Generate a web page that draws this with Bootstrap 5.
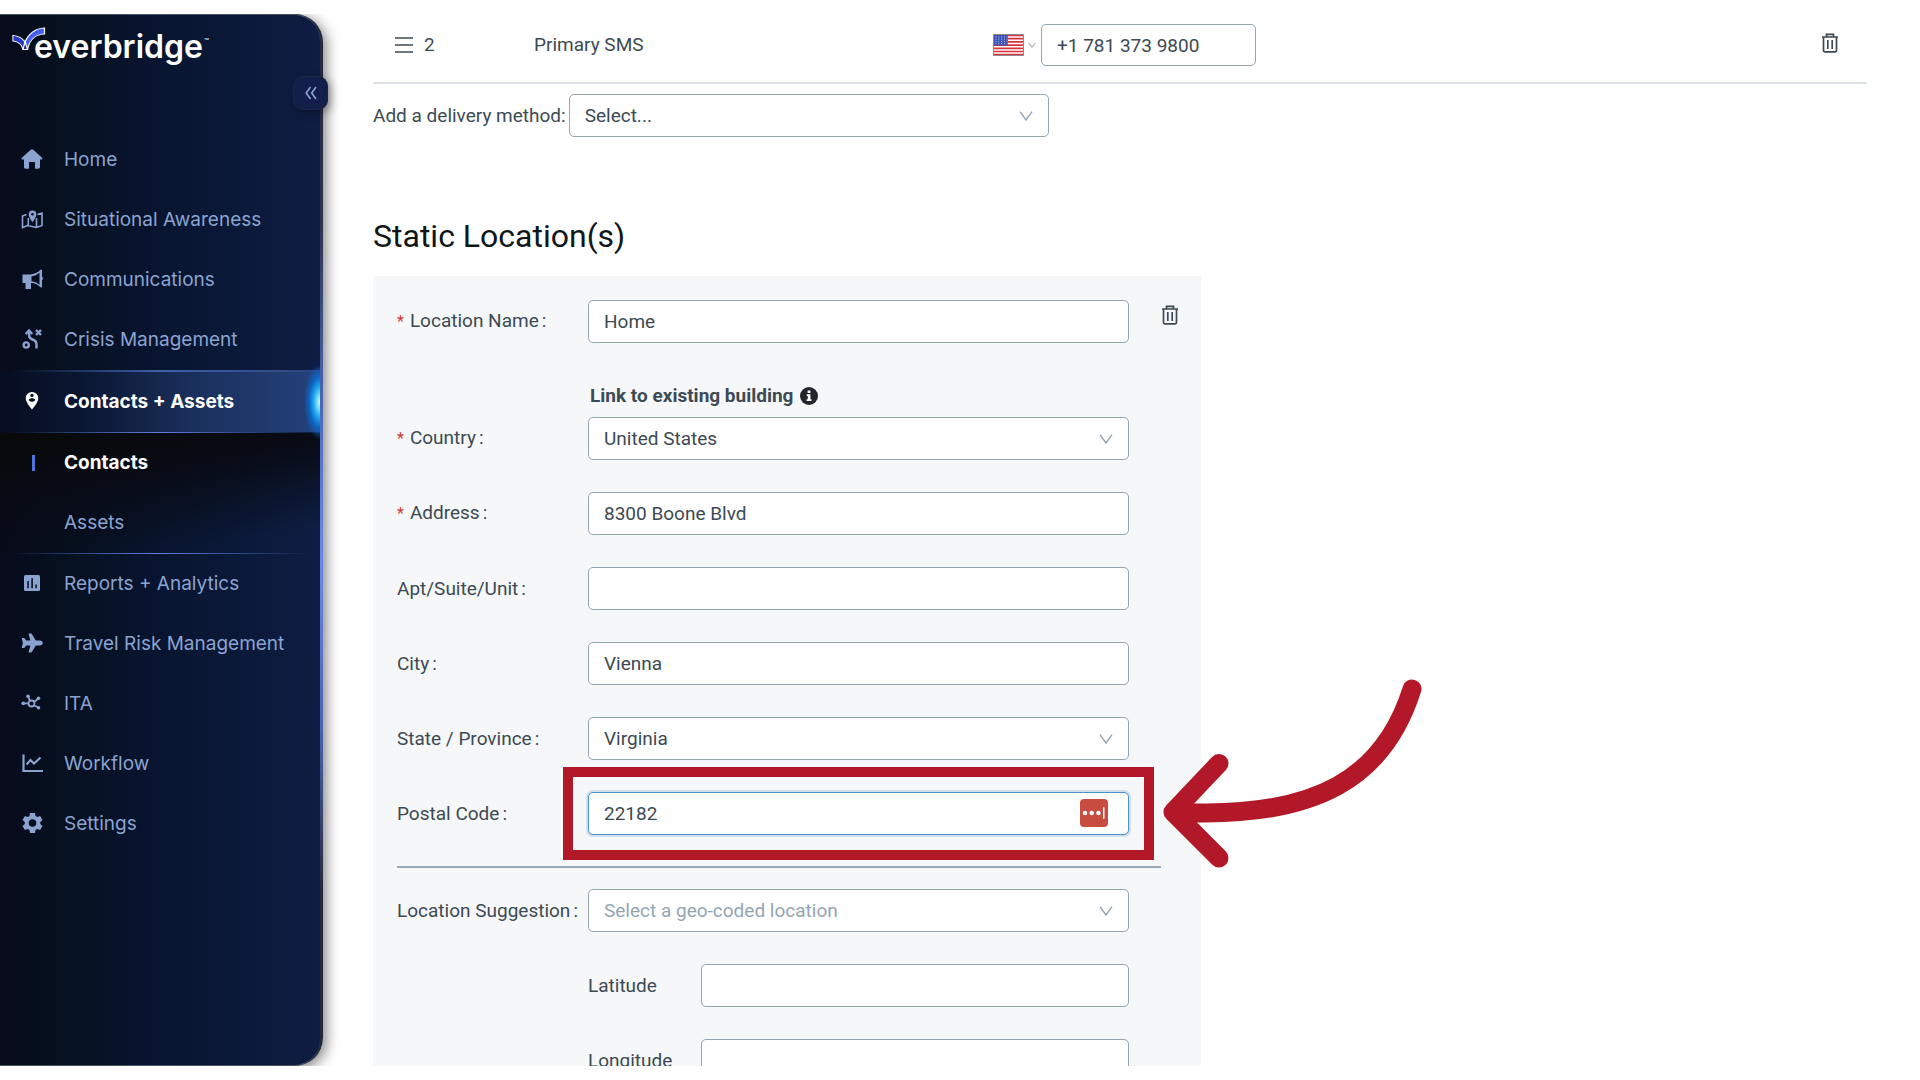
<!DOCTYPE html>
<html lang="en">
<head>
<meta charset="utf-8">
<meta name="viewport" content="width=device-width, initial-scale=1">
<title>Everbridge – Contacts</title>
<link rel="stylesheet" href="https://cdn.jsdelivr.net/npm/bootstrap@5.3.0/dist/css/bootstrap.min.css">
<style>
  body { font-family: Roboto, "Liberation Sans", sans-serif; font-size: 19px; line-height: 24px; color: #3d4a53; background: #fff; }
  .app-frame { height: 100vh; padding: 14px 0; }
  .app-clip { height: 100%; overflow: hidden; }

  /* Sidebar */
  .side { width: 323px; font-family: Inter, "Liberation Sans", sans-serif; border-radius: 0 28px 28px 0; box-shadow: 3px 3px 14px rgba(0,0,0,.5);
    background: linear-gradient(#23283a, #2a3350 20%, #5470c4 40%, #6a89e8 52%, #4a62b0 68%, #232838 84%); padding-right: 3px; }
  .side-body { height: 100%; border-top: 1px solid #4a5462; border-bottom: 1px solid #4a5462; border-radius: 0 26px 26px 0;
    background: linear-gradient(90deg, #070b1c, #06101f 18%, #08142e 45%, #0b1a3b 80%, #0f1d44); }
  .brand { height: 115px; padding: 12px 0 0 12px; }
  .brand-name { font-size: 32px; font-weight: 600; line-height: 40px; color: #fff; margin-left: -12px; }
  .brand-tm { font-size: 8px; line-height: 28px; color: #fff; margin-left: 1px; }
  .collapse-btn { position: absolute; top: 62px; right: -5px; width: 35px; height: 34px; border: 1px solid #1b2547; border-radius: 10px; background: #111f4a; color: #8ba3d0; box-shadow: 3px 3px 8px rgba(0,0,0,.35); }
  .side-link { height: 60px; padding-left: 20px; gap: 20px; color: #8ba3d0; text-decoration: none; font-size: 19px; }
  .side-link svg { width: 24px; height: 24px; flex: none; margin-bottom: 2px; }
  .side-link.current { color: #fff; font-weight: 700; }
  .side-line { height: 1px; background: linear-gradient(90deg, transparent 3%, #5f80e6 50%, transparent 97%); }
  .side-line-top { height: 2px; background: linear-gradient(90deg, transparent 3%, #3f5fa8 50%, #2a4681); }
  .side-active { position: relative; background: linear-gradient(90deg, #070d22, #0a1630 25%, #1a2f5b 60%, #25427c); }
  .side-active::after { content: ""; position: absolute; right: 0; top: -8px; width: 16px; height: 76px;
    background: radial-gradient(ellipse 100% 50% at 100% 50%, #e4fdff 0, #86e5fd 15%, #1aa5f0 42%, rgba(8,105,205,.85) 68%, transparent); }
  .side-sub { background: linear-gradient(170deg, #090909, #080b14 35%, rgba(8,12,22,0) 85%); }
  .side-bar { width: 3px; height: 16px; background: #4f74dd; margin: 0 9px 0 12px; }

  /* Form controls */
  .form-control, .form-select { height: 43px; font-size: 19px; line-height: 24px; color: #3d4a53; border: 1px solid #94a5b2; border-radius: 5px; padding: 8px 15px; }
  .form-select { --bs-form-select-bg-img: url("data:image/svg+xml,%3csvg xmlns='http://www.w3.org/2000/svg' viewBox='0 0 14 10'%3e%3cpath d='M1 .6 7 9 13 .6' fill='none' stroke='%2394a5b2' stroke-width='1.4'/%3e%3c/svg%3e"); background-position: right 15px center; background-size: 14px 10px; }
  .form-select.unset { color: #94a5b2; }
  .form-control.editing { border-color: #4c93cb; box-shadow: 0 0 0 2px #cfdfec; }
  .page { padding: 0 53px 0 50px; min-width: 0; }
  .method-row { padding: 10px 0 16px 22px; border-bottom: 2px solid #dde3e8; }
  .method-no { width: 139px; gap: 11px; }
  .method-kind { width: 459px; }
  .method-row .form-control { width: 215px; height: 42px; }
  .icon-btn { color: #3d4a53; background: none; border: 0; padding: 0; line-height: 1; }
  .flag-btn { gap: 4px; margin-right: 5px; }
  .add-row { margin-top: 10px; gap: 3px; }
  .add-row .form-select { width: 480px; }
  .sec-title { font-size: 32px; line-height: 40px; font-weight: 400; color: #101619; margin: 79px 0 20px; }
  .loc-panel { max-width: 828px; padding: 24px 22px 32px 24px; background: #f5f7f9; }
  .loc-row { display: flex; align-items: center; margin-bottom: 32px; }
  .loc-label { width: 191px; flex: none; white-space: nowrap; }
  .loc-label.needed::before { content: "*"; color: #d4382f; font-size: 16px; margin-right: 6px; }
  .colon { margin-left: 3px; }
  .loc-field { position: relative; flex: 1; }
  .loc-action { width: 50px; flex: none; text-align: right; }
  .sub-label { width: 113px; flex: none; }
  .link-row { margin: 41px 0 9px 193px; gap: 7px; color: #3d4a53; font-weight: 700; }
  .rule { height: 2px; margin: -1px 18px 21px 0; background: #9aa8b3; }
  .lp-badge { position: absolute; right: 21px; top: 7px; width: 28px; height: 28px; }
  .mark-box { position: absolute; inset: -25px; border: 10px solid #b31828; pointer-events: none; }
  .mark-arrow { position: absolute; left: calc(100% + 34px); top: -113px; width: 260px; height: 190px; pointer-events: none; }
</style>
</head>
<body>
<div class="app-frame">
<div class="app-clip d-flex">
  <aside class="side position-relative flex-shrink-0">
    <div class="side-body">
      <div class="brand d-flex align-items-start">
        <svg width="34" height="26" viewBox="0 0 34 26" fill="none" stroke="#fff" stroke-width="1.2" aria-hidden="true">
          <path d="M1 8.500C6 9 10 11 13 15 17 6 23 1.500 32.500 1V7C24 7.500 18 11 15.500 22.500H11C10 17 6 14.500 1 14Z" fill="#4560f0"/>
          <path d="M1.600 9.100C6 9.600 10 12 12.600 15.600L11.400 21.500C10 17 6 14 1.600 13.500Z" fill="#2338c4" stroke="none"/>
          <path d="M13 14.500 11 22.500H15.500Z" fill="#16208c"/>
        </svg>
        <span class="brand-name">everbridge</span><span class="brand-tm">™</span>
      </div>
      <nav aria-label="Main">
        <a href="#" class="side-link d-flex align-items-center">
          <svg viewBox="0 0 24 24" fill="currentColor"><path d="M12 2.200c.5 0 .9.200 1.300.500l8.700 8c.8.700.3 1.900-.7 1.900H20V20c0 1-.7 1.700-1.700 1.700H15V16c0-.6-.4-1-1-1h-4c-.6 0-1 .4-1 1v5.700H5.700C4.700 21.700 4 21 4 20v-7.400H2.600c-1 0-1.500-1.200-.7-1.900l8.800-8c.4-.3.800-.5 1.300-.5Z"/></svg>Home</a>
        <a href="#" class="side-link d-flex align-items-center">
          <svg viewBox="0 0 24 24" fill="none" stroke="currentColor" stroke-width="1.600"><path d="M6.500 7.500 2.500 9v11.500l5-2 9 2 5.500-2V6l-4.500 1.500M8.300 11v7.500M16.500 11v9"/><path d="M12.500 15C9.800 11.500 8.700 9.300 8.700 7.200a3.800 3.800 0 0 1 7.600 0c0 2.100-1.100 4.300-3.800 7.800Z" fill="currentColor" stroke="none"/><circle cx="12.500" cy="7.200" r="1.300" fill="#08122a" stroke="none"/></svg>Situational Awareness</a>
        <a href="#" class="side-link d-flex align-items-center">
          <svg viewBox="0 0 24 24" fill="currentColor" fill-rule="evenodd"><path d="M2.500 7.500H10C14 7.300 18 5.500 20.500 2.700c.6-.6 1.500-.3 1.500.5v6.300c1.300.8 1.300 3 0 3.800v6.500c0 .8-.9 1.100-1.500.5-2-2.200-4.800-3.800-8-4.300H11V22H5.500v-6h-3ZM11.500 9.300v4.900c3 .3 5.700 1.500 8 3.500V5.700c-2.300 2-5 3.300-8 3.600Z"/></svg>Communications</a>
        <a href="#" class="side-link d-flex align-items-center">
          <svg viewBox="0 0 24 24" fill="none" stroke="currentColor" stroke-width="2.400"><circle cx="6.200" cy="18" r="2.600"/><path d="M16.500 21.500v-4c0-3-1.500-4.200-4-5s-3.500-2-3.500-5V4.500M5.700 7 9 3.500 12.300 7M16 3l5 5M21 3l-5 5"/></svg>Crisis Management</a>
        <div class="side-line-top"></div>
        <div class="side-active">
          <a href="#" class="side-link current d-flex align-items-center">
            <svg viewBox="0 0 24 24" fill="currentColor" fill-rule="evenodd"><path d="M12 3a6.300 6.300 0 0 1 6.300 6.300c0 4.200-6.300 11.200-6.300 11.200S5.700 13.500 5.700 9.300A6.300 6.300 0 0 1 12 3Zm0 1.700a1.700 1.700 0 1 0 0 3.400 1.700 1.700 0 0 0 0-3.400ZM8.700 11c.7 1.100 1.900 1.800 3.300 1.800s2.600-.7 3.300-1.800c0-1.100-2.200-1.700-3.300-1.700S8.700 9.900 8.700 11Z"/></svg>Contacts + Assets</a>
        </div>
        <div class="side-line"></div>
        <div class="side-sub">
          <a href="#" class="side-link current d-flex align-items-center"><span class="side-bar"></span>Contacts</a>
          <a href="#" class="side-link d-flex align-items-center"><svg></svg>Assets</a>
        </div>
        <div class="side-line"></div>
        <a href="#" class="side-link d-flex align-items-center">
          <svg viewBox="0 0 24 24" fill="currentColor" fill-rule="evenodd"><path d="M5.500 4h13A1.500 1.500 0 0 1 20 5.500v13a1.500 1.500 0 0 1-1.500 1.500h-13A1.500 1.500 0 0 1 4 18.500v-13A1.500 1.500 0 0 1 5.500 4ZM7.300 10v7.300h1.500V10Zm4 -2.700v10h1.600v-10Zm4 6.300v3.700h1.500v-3.700Z"/></svg>Reports + Analytics</a>
        <a href="#" class="side-link d-flex align-items-center">
          <svg viewBox="0 0 24 24" fill="currentColor"><path d="M8.500 2.500h3l4.300 7h4c1.500 0 3 1.200 3 2.500s-1.500 2.500-3 2.500h-4l-4.300 7h-3l1.900-7H6.300L4.200 17H1.700l1.200-5-1.200-5h2.500l2.100 2.500h4.100Z"/></svg>Travel Risk Management</a>
        <a href="#" class="side-link d-flex align-items-center">
          <svg viewBox="0 0 24 24" fill="none" stroke="currentColor" stroke-width="1.800"><circle cx="11.500" cy="12.500" r="3"/><path d="M8.500 12.300H4M10 9.700 8.300 6M14 11l4.500-3.500M14 14.500l4.500 2"/><g fill="currentColor" stroke="none"><circle cx="3.300" cy="12.300" r="1.900"/><circle cx="8" cy="5.300" r="1.800"/><circle cx="18.500" cy="7.300" r="1.800"/><circle cx="18.500" cy="16.800" r="1.800"/></g></svg>ITA</a>
        <a href="#" class="side-link d-flex align-items-center">
          <svg viewBox="0 0 24 24" fill="none" stroke="currentColor" stroke-width="2.200"><path d="M3.500 3.500V20H23M6.500 13.500l4-4.500 3.500 3.500 6.500-6"/></svg>Workflow</a>
        <a href="#" class="side-link d-flex align-items-center">
          <svg viewBox="0 0 24 24" fill="currentColor"><path fill-rule="evenodd" d="M10 2h5l.5 3 1.800 1 2.800-1.100 2.400 4.200-2.300 1.900v2l2.300 1.900-2.400 4.200-2.800-1.100-1.800 1-.5 3h-5l-.5-3-1.800-1-2.800 1.100-2.400-4.200L4.800 13v-2L2.500 9.100l2.400-4.200L7.700 6l1.800-1Zm2.500 6.200a3.800 3.800 0 1 0 0 7.600 3.800 3.800 0 0 0 0-7.600Z"/></svg>Settings</a>
      </nav>
    </div>
    <button type="button" class="collapse-btn d-flex align-items-center justify-content-center p-0" aria-label="Collapse menu">
      <svg width="12" height="14" viewBox="0 0 12 14" fill="none" stroke="currentColor" stroke-width="1.600"><path d="M5.500 1 1.200 7l4.300 6M11 1 6.700 7l4.300 6"/></svg>
    </button>
  </aside>

  <main class="page flex-grow-1">
    <div class="method-row d-flex align-items-center">
      <div class="method-no d-flex align-items-center">
        <svg width="18" height="16" viewBox="0 0 18 16" stroke="#3d4a53" stroke-width="1.600"><path d="M0 1h18M0 8h18M0 15h18"/></svg>2
      </div>
      <label class="method-kind" for="sms">Primary SMS</label>
      <button type="button" class="icon-btn flag-btn d-flex align-items-center" aria-label="Country code: United States">
        <svg width="31" height="22" viewBox="0 0 31 22"><path fill="#fff" d="M0 0h31v22H0z"/><path stroke="#d8323e" stroke-width="1.700" d="M0 1.500h31M0 4.700h31M0 7.900h31M0 11.100h31M0 14.300h31M0 17.500h31M0 20.700h31"/><path fill="#3a50b5" d="M1 1h14v10.500H1z"/><path stroke="#c5cdf0" stroke-width="1" stroke-dasharray="1 1.800" d="M2.500 3h12M2.500 5.200h12M2.500 7.400h12M2.500 9.600h12"/><path fill="none" stroke="#8b8b8b" d="M.5.500h30v21H.5z"/></svg>
        <svg width="8" height="6" viewBox="0 0 8 6" fill="none" stroke="#a8b2ba" stroke-width="1.200"><path d="m.8 1 3.200 4 3.200-4"/></svg>
      </button>
      <input id="sms" type="tel" class="form-control" value="+1 781 373 9800">
      <button type="button" class="icon-btn ms-auto me-4 pe-1 pb-1" aria-label="Delete Primary SMS">
        <svg width="18" height="20" viewBox="0 0 18 20" fill="none" stroke="currentColor" stroke-width="1.700"><path d="M1 4h16M5.500 4V1.300h7V4M2.500 4v13.500q0 1.300 1.300 1.300h10.400q1.300 0 1.300-1.300V4M6.800 7v9M11.200 7v9"/></svg>
      </button>
    </div>
    <div class="add-row d-flex align-items-center">
      <label for="method">Add a delivery method:</label>
      <select id="method" class="form-select"><option>Select...</option></select>
    </div>

    <h2 class="sec-title">Static Location(s)</h2>
    <form class="loc-panel">
      <div class="loc-row mb-0">
        <label class="loc-label needed" for="lname">Location Name<span class="colon">:</span></label>
        <div class="loc-field"><input id="lname" class="form-control" value="Home"></div>
        <div class="loc-action"><button type="button" class="icon-btn pb-3" aria-label="Delete location">
          <svg width="18" height="20" viewBox="0 0 18 20" fill="none" stroke="currentColor" stroke-width="1.700"><path d="M1 4h16M5.500 4V1.300h7V4M2.500 4v13.500q0 1.300 1.300 1.300h10.400q1.300 0 1.300-1.300V4M6.800 7v9M11.200 7v9"/></svg>
        </button></div>
      </div>
      <div class="link-row d-flex align-items-center">Link to existing building
        <svg width="18" height="18" viewBox="0 0 18 18"><circle cx="9" cy="9" r="9" fill="#20262b"/><path d="M7.600 3.500h2.800v2.400H7.600zM6.700 7.200h3.700v5h1.100v1.900H6.600v-1.900h1.200V9H6.700z" fill="#fff"/></svg>
      </div>
      <div class="loc-row">
        <label class="loc-label needed" for="country">Country<span class="colon">:</span></label>
        <div class="loc-field"><select id="country" class="form-select"><option>United States</option></select></div>
        <div class="loc-action"></div>
      </div>
      <div class="loc-row">
        <label class="loc-label needed" for="addr">Address<span class="colon">:</span></label>
        <div class="loc-field"><input id="addr" class="form-control" value="8300 Boone Blvd"></div>
        <div class="loc-action"></div>
      </div>
      <div class="loc-row">
        <label class="loc-label" for="apt">Apt/Suite/Unit<span class="colon">:</span></label>
        <div class="loc-field"><input id="apt" class="form-control"></div>
        <div class="loc-action"></div>
      </div>
      <div class="loc-row">
        <label class="loc-label" for="city">City<span class="colon">:</span></label>
        <div class="loc-field"><input id="city" class="form-control" value="Vienna"></div>
        <div class="loc-action"></div>
      </div>
      <div class="loc-row">
        <label class="loc-label" for="state">State / Province<span class="colon">:</span></label>
        <div class="loc-field"><select id="state" class="form-select"><option>Virginia</option></select></div>
        <div class="loc-action"></div>
      </div>
      <div class="loc-row">
        <label class="loc-label" for="zip">Postal Code<span class="colon">:</span></label>
        <div class="loc-field">
          <input id="zip" class="form-control editing" value="22182">
          <svg class="lp-badge" viewBox="0 0 28 28"><rect width="28" height="28" rx="4" fill="#c94c40"/><g fill="#fff"><circle cx="5" cy="14" r="2.200"/><circle cx="11.700" cy="14" r="2.200"/><circle cx="18.400" cy="14" r="2.200"/><rect x="23" y="8" width="1.500" height="12" rx=".7"/></g></svg>
          <div class="mark-box"></div>
          <svg class="mark-arrow" viewBox="0 0 260 190" fill="none" stroke="#b31828" stroke-width="19" stroke-linecap="round" stroke-linejoin="round"><path d="M249 10C222 96 157 141 12 133M56 84.500 10 133l46 46"/></svg>
        </div>
        <div class="loc-action"></div>
      </div>
      <div class="rule"></div>
      <div class="loc-row">
        <label class="loc-label" for="sugg">Location Suggestion<span class="colon">:</span></label>
        <div class="loc-field"><select id="sugg" class="form-select unset"><option>Select a geo-coded location</option></select></div>
        <div class="loc-action"></div>
      </div>
      <div class="loc-row">
        <div class="loc-label"></div>
        <label class="sub-label" for="lat">Latitude</label>
        <div class="loc-field"><input id="lat" class="form-control"></div>
        <div class="loc-action"></div>
      </div>
      <div class="loc-row mb-0">
        <div class="loc-label"></div>
        <label class="sub-label" for="lon">Longitude</label>
        <div class="loc-field"><input id="lon" class="form-control"></div>
        <div class="loc-action"></div>
      </div>
    </form>
  </main>
</div>
</div>
<script src="https://cdn.jsdelivr.net/npm/bootstrap@5.3.0/dist/js/bootstrap.bundle.min.js"></script>
</body>
</html>
